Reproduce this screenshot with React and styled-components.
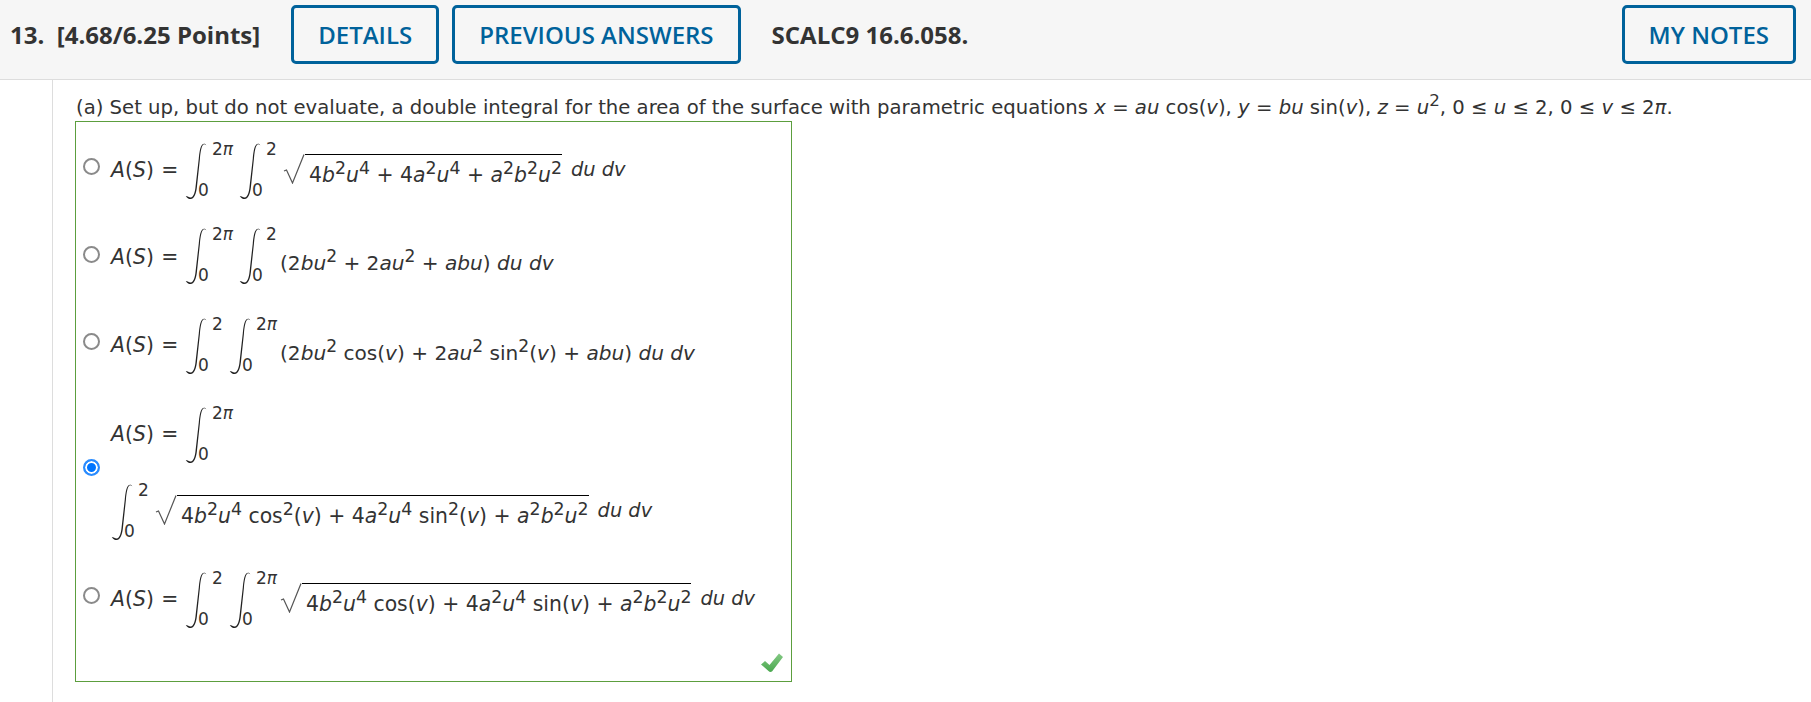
import styled, { createGlobalStyle } from 'styled-components'

const GlobalStyle = createGlobalStyle`
  html, body {
    margin: 0;
    padding: 0;
    background: #fff;
  }
  body {
    font-family: 'Open Sans', 'Noto Sans', sans-serif;
    color: #333;
    overflow: hidden;
  }
`

const Header = styled.header`
  display: flex;
  align-items: center;
  height: 80px;
  box-sizing: border-box;
  padding: 0 15px 10px 10px;
  background: #f6f6f6;
  border-bottom: 1px solid #ddd;
`

const Points = styled.span`
  font-size: 24px;
  font-weight: 700;
  color: #333;
  margin-right: 31px;
  white-space: pre;
`

const Code = styled(Points)`
  margin: 0 0 0 31px;
`

const Button = styled.button`
  height: 59px;
  box-sizing: border-box;
  padding: 0 24px;
  margin-right: ${p => p.$gap || 0}px;
  margin-left: ${p => (p.$right ? 'auto' : 0)};
  background: transparent;
  border: 3px solid #00629b;
  border-radius: 5px;
  font-family: inherit;
  font-size: 24px;
  font-weight: 600;
  color: #00629b;
`

const Body = styled.main`
  margin-left: 52px;
  border-left: 1px solid #ddd;
  padding: 12px 0 0 22px;
  height: 622px;
  box-sizing: border-box;
`

const Prompt = styled.p`
  margin: 0 0 0 1px;
  height: 29px;
  font-family: 'DejaVu Sans', sans-serif;
  font-size: 19.65px;
  line-height: 32px;
  white-space: nowrap;
`

const AnswerBox = styled.div`
  position: relative;
  width: 717px;
  height: 561px;
  box-sizing: border-box;
  border: 1px solid #5c9e3e;
  padding-top: 21px;
`

const Option = styled.label`
  display: flex;
  align-items: flex-start;
  padding-left: 7px;
  margin-bottom: ${p => p.$after || 0}px;
  font-family: 'DejaVu Sans', sans-serif;
  font-size: 20.4px;
  line-height: 26px;
`

const Radio = styled.span`
  flex: none;
  width: 17px;
  height: 17px;
  box-sizing: border-box;
  border-radius: 50%;
  border: 2px solid ${p => (p.$on ? '#2a8cff' : '#8a8a8a')};
  background: ${p => (p.$on ? '#0075ff' : '#fff')};
  box-shadow: ${p => (p.$on ? 'inset 0 0 0 2px #fff' : 'none')};
  margin: ${p => p.$top || 15}px 11px 0 0;
`

const Stack = styled.div`
  display: flex;
  flex-direction: column;
  gap: 21px;
`

const Equation = styled.div`
  display: flex;
  align-items: flex-start;
  white-space: pre;
  color: #333;
`

const Var = styled.i`
  font-style: italic;
`

const Sup = styled.sup`
  font-size: 0.85em;
  line-height: 0;
  vertical-align: 8px;
`

const Lhs = styled.span`
  width: 74px;
  flex: none;
  padding-top: ${p => p.$top || 14}px;
  word-spacing: 1px;
`

const Expr = styled.span`
  padding-top: 22px;
  font-size: 20.1px;
`

const Diff = styled.i`
  padding-top: 14px;
  font-size: 19.4px;
`

const IntegralBox = styled.span`
  display: grid;
  flex: none;
  grid-template-columns: 22px ${p => p.$width || 22}px;
  grid-template-rows: 1fr 1fr;
  height: 56px;
  font-size: 17px;
  line-height: 18px;
`

const Glyph = styled.svg`
  grid-row: 1 / 3;
  width: 22px;
  height: 56px;
`

const Upper = styled.span`
  margin: -3px 0 0 5px;
`

const Lower = styled.span`
  align-self: end;
  margin-left: -9px;
`

const Radical = styled.span`
  display: flex;
  align-items: flex-start;
  margin: 11px 9px 0 0;
`

const RadicalSign = styled.svg`
  width: 22px;
  height: 30px;
  flex: none;
`

const Radicand = styled.span`
  border-top: 1px solid #000;
  padding: 7px 0 0 4px;
`

const Check = styled.svg`
  position: absolute;
  right: 8px;
  bottom: 9px;
  width: 23px;
  height: 19px;
`

const Integral = ({ top, width }) => (
  <IntegralBox $width={width}>
    <Glyph viewBox="0 0 22 57">
      <path
        d="M21.500 2.300C20.500.6 18.500.4 17.200 1.800 15.200 4 14.400 10 13.800 16L10.600 44C10 50 8.600 55.200 5.600 55.400 4 55.500 2.400 54 .6 54 2 56.800 4 57 5.500 57 9.500 57 11.200 51 11.900 45L15 16C15.600 9 16.600 3 18.600 1.600 19.600 1 20.500 1.600 21.500 2.300Z"
        fill="#222"
      />
    </Glyph>
    <Upper>{top}</Upper>
    <Lower>0</Lower>
  </IntegralBox>
)

const TwoPi = () => <>2<Var>π</Var></>

const Sqrt = ({ children }) => (
  <Radical>
    <RadicalSign viewBox="0 0 22 30">
      <path d="M1 17L3.500 16L9.500 29L21 .5" fill="none" stroke="#555" strokeWidth="1.200" />
    </RadicalSign>
    <Radicand>{children}</Radicand>
  </Radical>
)

const AofS = ({ top }) => (
  <Lhs $top={top}>
    <Var>A</Var>(<Var>S</Var>) =
  </Lhs>
)

const App = () => (
  <>
    <GlobalStyle />
    <Header>
      <Points>13.  [4.68/6.25 Points]</Points>
      <Button $gap={13}>DETAILS</Button>
      <Button>PREVIOUS ANSWERS</Button>
      <Code>SCALC9 16.6.058.</Code>
      <Button $right>MY NOTES</Button>
    </Header>
    <Body>
      <Prompt>
        (a) Set up, but do not evaluate, a double integral for the area of the surface with parametric equations{' '}
        <Var>x</Var> = <Var>au</Var> cos(<Var>v</Var>), <Var>y</Var> = <Var>bu</Var> sin(<Var>v</Var>), <Var>z</Var> ={' '}
        <Var>u</Var><Sup>2</Sup>, 0 ≤ <Var>u</Var> ≤ 2, 0 ≤ <Var>v</Var> ≤ 2<Var>π</Var>.
      </Prompt>
      <AnswerBox>
        <Option $after={29}>
          <Radio />
          <Equation>
            <AofS />
            <Integral top={<TwoPi />} width={32} />
            <Integral top="2" />
            <Sqrt>
              4<Var>b</Var><Sup>2</Sup><Var>u</Var><Sup>4</Sup> + 4<Var>a</Var><Sup>2</Sup><Var>u</Var><Sup>4</Sup> + <Var>a</Var><Sup>2</Sup><Var>b</Var><Sup>2</Sup><Var>u</Var><Sup>2</Sup>
            </Sqrt>
            <Diff>du dv</Diff>
          </Equation>
        </Option>
        <Option $after={34}>
          <Radio $top={18} />
          <Equation>
            <AofS top={16} />
            <Integral top={<TwoPi />} width={32} />
            <Integral top="2" width={19} />
            <Expr>
              (2<Var>bu</Var><Sup>2</Sup> + 2<Var>au</Var><Sup>2</Sup> + <Var>abu</Var>) <Var>du dv</Var>
            </Expr>
          </Equation>
        </Option>
        <Option $after={33}>
          <Radio />
          <Equation>
            <AofS />
            <Integral top="2" />
            <Integral top={<TwoPi />} width={29} />
            <Expr>
              (2<Var>bu</Var><Sup>2</Sup> cos(<Var>v</Var>) + 2<Var>au</Var><Sup>2</Sup> sin<Sup>2</Sup>(<Var>v</Var>) + <Var>abu</Var>) <Var>du dv</Var>
            </Expr>
          </Equation>
        </Option>
        <Option $after={32}>
          <Radio $on $top={52} />
          <Stack>
            <Equation>
              <AofS />
              <Integral top={<TwoPi />} width={32} />
            </Equation>
            <Equation>
              <Integral top="2" />
              <Sqrt>
                4<Var>b</Var><Sup>2</Sup><Var>u</Var><Sup>4</Sup> cos<Sup>2</Sup>(<Var>v</Var>) + 4<Var>a</Var><Sup>2</Sup><Var>u</Var><Sup>4</Sup> sin<Sup>2</Sup>(<Var>v</Var>) + <Var>a</Var><Sup>2</Sup><Var>b</Var><Sup>2</Sup><Var>u</Var><Sup>2</Sup>
              </Sqrt>
              <Diff>du dv</Diff>
            </Equation>
          </Stack>
        </Option>
        <Option>
          <Radio />
          <Equation>
            <AofS />
            <Integral top="2" />
            <Integral top={<TwoPi />} width={29} />
            <Sqrt>
              4<Var>b</Var><Sup>2</Sup><Var>u</Var><Sup>4</Sup> cos(<Var>v</Var>) + 4<Var>a</Var><Sup>2</Sup><Var>u</Var><Sup>4</Sup> sin(<Var>v</Var>) + <Var>a</Var><Sup>2</Sup><Var>b</Var><Sup>2</Sup><Var>u</Var><Sup>2</Sup>
            </Sqrt>
            <Diff>du dv</Diff>
          </Equation>
        </Option>
        <Check viewBox="0 0 23 19">
          <defs>
            <linearGradient id="checkFill" x1="0" y1="0" x2="0" y2="1">
              <stop offset="0" stopColor="#84c984" />
              <stop offset="1" stopColor="#4aa84f" />
            </linearGradient>
          </defs>
          <path d="M1 11.500L5 8L9.500 12L19 .5L23 4L12 18.500Q10 19.500 8.500 18Z" fill="url(#checkFill)" />
        </Check>
      </AnswerBox>
    </Body>
  </>
)

export default App
